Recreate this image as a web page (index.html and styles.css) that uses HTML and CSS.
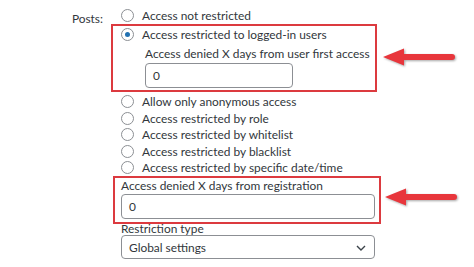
FILE: index.html
```html
<!DOCTYPE html>
<html lang="en">
<head>
    <meta charset="UTF-8">
    <title>Posts restriction</title>
    <link rel="stylesheet" href="styles.css">
</head>
<body>
    <div class="setting-row">
        <div class="setting-label">Posts:</div>
        <div class="options">
            <div class="opt"><span class="radio"></span>Access not restricted</div>

            <div class="mark mark-first">
                <div class="opt"><span class="radio checked"></span>Access restricted to logged-in users</div>
                <div class="sub">
                    <div class="field-label">Access denied X days from user first access</div>
                    <div class="input input-short">0</div>
                </div>
                <svg class="arrow" width="76" height="22" viewBox="0 0 76 22">
                    <path d="M1 11 L22 2.5 L22 8 L70 8 A3 3 0 0 1 70 14 L22 14 L22 19.5 Z" fill="#e8363c"/>
                </svg>
            </div>

            <div class="opt"><span class="radio"></span>Allow only anonymous access</div>
            <div class="opt"><span class="radio"></span>Access restricted by role</div>
            <div class="opt"><span class="radio"></span>Access restricted by whitelist</div>
            <div class="opt"><span class="radio"></span>Access restricted by blacklist</div>
            <div class="opt"><span class="radio"></span>Access restricted by specific date/time</div>

            <div class="mark mark-second">
                <div class="field-label">Access denied X days from registration</div>
                <div class="input input-wide">0</div>
                <svg class="arrow" width="76" height="22" viewBox="0 0 76 22">
                    <path d="M1 11 L22 2.5 L22 8 L70 8 A3 3 0 0 1 70 14 L22 14 L22 19.5 Z" fill="#e8363c"/>
                </svg>
            </div>

            <div class="field-label type-label">Restriction type</div>
            <div class="input input-wide select">
                Global settings
                <svg class="chevron" width="10" height="6" viewBox="0 0 10 6">
                    <path d="M1 1 L5 5 L9 1" fill="none" stroke="#3c434a" stroke-width="1.4"/>
                </svg>
            </div>
        </div>
    </div>
</body>
</html>
```

FILE: styles.css
```css
body {
    margin: 0;
    background: #fff;
    font-family: Lato, "Noto Sans", sans-serif;
    font-size: 11.9px;
    color: #32373c;
}
.setting-row {
    display: flex;
    padding-top: 7px;
}
.setting-label {
    width: 103px;
    text-align: right;
    padding-top: 3px;
    line-height: 17px;
}
.options {
    margin-left: 18px;
    display: flex;
    flex-direction: column;
}
.opt {
    display: flex;
    align-items: center;
    height: 16.5px;
    white-space: nowrap;
}
.radio {
    width: 11px;
    height: 11px;
    border: 1px solid #8c8f94;
    border-radius: 50%;
    margin-right: 8px;
    position: relative;
    flex: none;
}
.radio.checked::after {
    content: "";
    position: absolute;
    left: 3px;
    top: 3px;
    width: 5px;
    height: 5px;
    border-radius: 50%;
    background: #2271b1;
}
.mark {
    position: relative;
    box-sizing: border-box;
    border: 2px solid #dc3a3f;
}
.mark-first {
    width: 266px;
    margin-left: -10px;
    padding: 0 0 2px 8px;
}
.mark-first .opt {
    height: 17px;
}
.mark-second {
    width: 268px;
    margin-left: -8px;
    padding: 0 4px 3px 6px;
}
.mark-first + .opt {
    margin-top: 2px;
}
.sub {
    padding-left: 24px;
    padding-top: 3px;
}
.field-label {
    line-height: 16px;
    white-space: nowrap;
}
.input {
    box-sizing: border-box;
    height: 25px;
    border: 1px solid #8c8f94;
    border-radius: 4px;
    padding: 0 7px;
    line-height: 23px;
    background: #fff;
}
.input-short {
    width: 148px;
}
.mark-first .input {
    margin-top: 1px;
}
.input-wide {
    width: 254px;
}
.type-label {
    line-height: 14px;
    margin-top: -2px;
}
.select {
    height: 24px;
    margin-top: -1px;
    position: relative;
}
.chevron {
    position: absolute;
    right: 8px;
    top: 9px;
}
.arrow {
    position: absolute;
    filter: drop-shadow(1px 1px 1px rgba(0, 0, 0, 0.35));
}
.mark-first .arrow {
    left: calc(100% + 7px);
    top: 20px;
}
.mark-second .arrow {
    left: calc(100% + 5px);
    top: 8px;
}
```
